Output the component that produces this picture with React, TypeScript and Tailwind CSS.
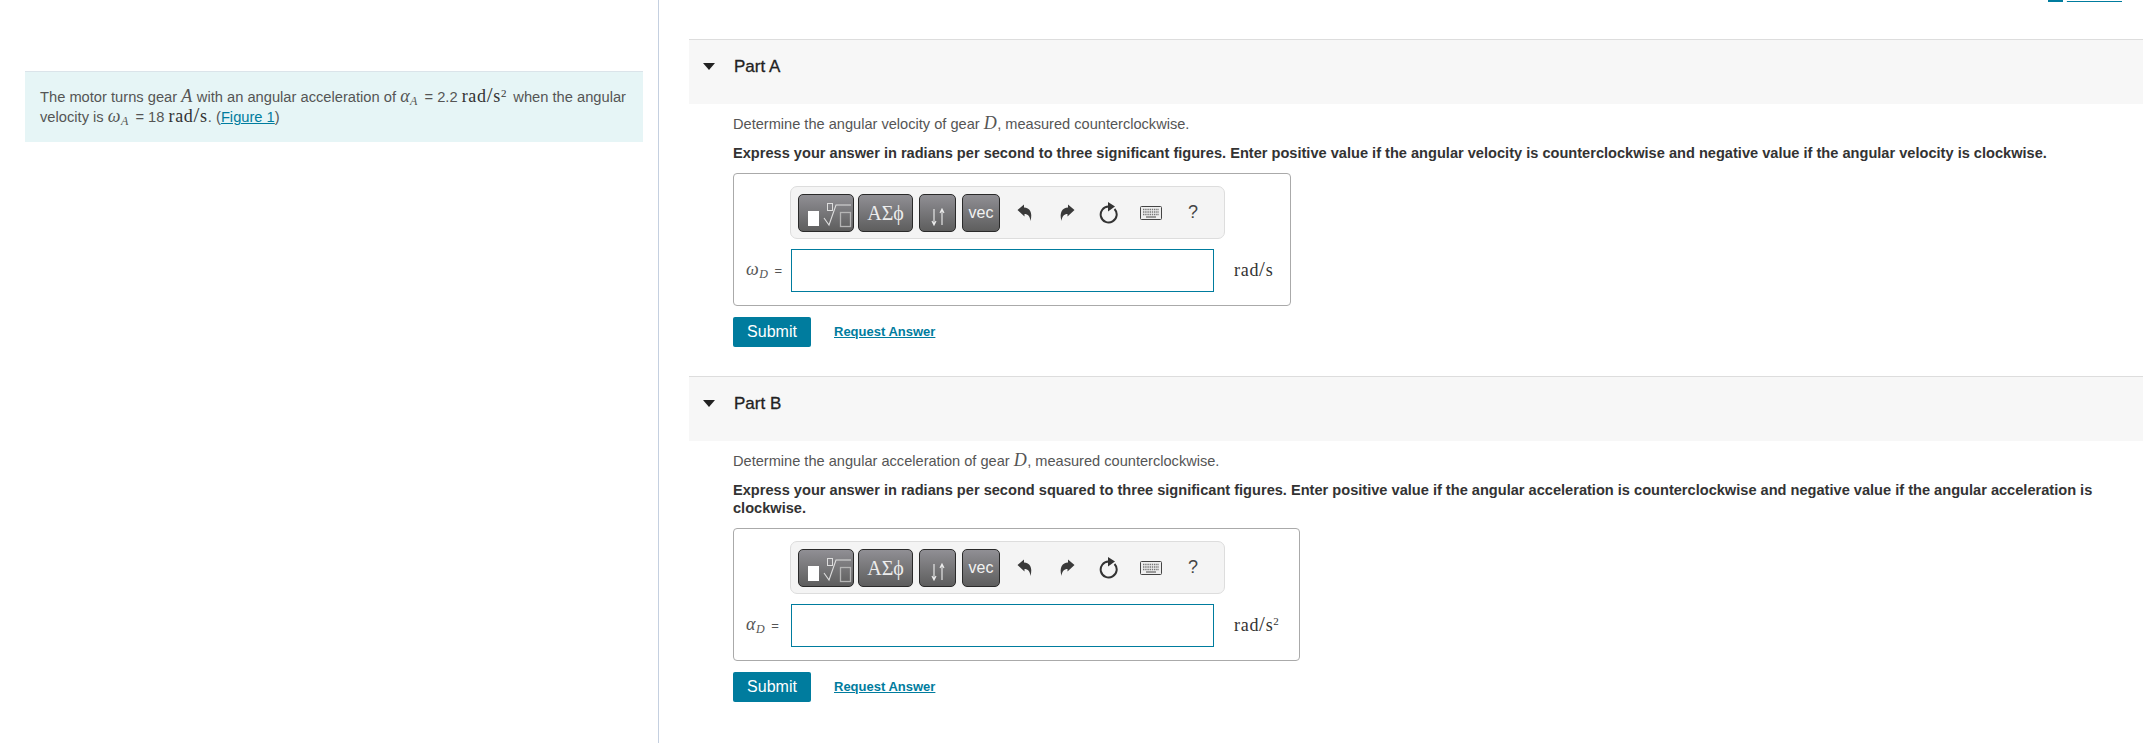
import React from 'react';

const mathFont = "font-['Liberation_Serif',serif]";

const V: React.FC<{ children: React.ReactNode; sub?: string }> = ({ children, sub }) => (
    <span className={`${mathFont} italic text-[18px] leading-[0] tracking-[0.5px]`}>
        {children}
        {sub && <sub className="text-[12px] pr-[2.5px]">{sub}</sub>}
    </span>
);

const Unit: React.FC<{ sup?: boolean; children: React.ReactNode }> = ({ children, sup }) => (
    <span className={`${mathFont} text-[18px] leading-[0] tracking-[0.7px] text-[#333]`}>
        {children}
        <span className="text-[21px] leading-[0] font-light">/</span>s
        {sup && <sup className="text-[11px] pr-[2px]">2</sup>}
    </span>
);

const ToolBtn: React.FC<{ w: string; children: React.ReactNode }> = ({ w, children }) => (
    <div className={`${w} h-[38px] shrink-0 rounded-[5px] border border-[#2a2a2a] bg-gradient-to-b from-[#908f94] to-[#5e5e5e] text-[#f2f2f2] flex items-center justify-center`}>
        {children}
    </div>
);

const TemplateIcon = () => (
    <svg width="54" height="36" viewBox="0 0 54 36" fill="none">
        <rect x="9" y="16" width="11" height="15" fill="#fff" />
        <rect x="28.5" y="8.5" width="5" height="7" stroke="#ddd" />
        <path d="M25 23 L30 30 L37 10 H52" stroke="#ddd" strokeWidth="1.1" />
        <rect x="41.5" y="17.5" width="10" height="14" stroke="#b5b5b5" strokeWidth="1.3" />
    </svg>
);

const ArrowsIcon = () => (
    <svg width="14" height="18" viewBox="0 0 14 18" fill="none" stroke="#eee" strokeWidth="1.1" className="mt-[9px]">
        <path d="M3 1 V17 M1 13 L3 17 L5 13" />
        <path d="M11 17 V1 M9 5 L11 1 L13 5" />
    </svg>
);

const Undo = ({ flip }: { flip?: boolean }) => (
    <svg width="16" height="18" viewBox="0 0 16 18" className={flip ? '-scale-x-100' : ''}>
        <path d="M0.5 6 L7 0.5 V3.5 C12.5 4 16 8 13.5 17 C13 12.5 11 10 7.5 10 V12.5 Z" fill="#3a3a3a" />
    </svg>
);

const ResetIcon = () => (
    <svg width="20" height="22" viewBox="0 0 20 22" fill="none">
        <path d="M9.5 4.5 A8 8 0 1 0 15.5 7" stroke="#333" strokeWidth="2" />
        <path d="M9 0 L16 4.5 L9 9.5 Z" fill="#333" />
    </svg>
);

const KeyboardIcon = () => (
    <svg width="22" height="14" viewBox="0 0 22 14">
        <rect x="0.5" y="0.5" width="21" height="13" rx="1" fill="#eee" stroke="#444" />
        <path d="M3 3.5 H19 M3 6 H19 M3 8.5 H19" stroke="#777" strokeWidth="1.4" strokeDasharray="1.4 0.8" />
        <path d="M6 11 H16" stroke="#777" strokeWidth="1.4" />
    </svg>
);

const Toolbar = () => (
    <div className="w-[435px] h-[53px] rounded-[7px] border border-[#ddd] bg-[#f4f4f4] flex items-center pl-[7px]">
        <ToolBtn w="w-[56px]"><TemplateIcon /></ToolBtn>
        <div className="ml-[4px]">
            <ToolBtn w="w-[55px]"><span className={`${mathFont} text-[20px] text-[#ececec]`}>ΑΣϕ</span></ToolBtn>
        </div>
        <div className="ml-[6px]">
            <ToolBtn w="w-[37px]"><ArrowsIcon /></ToolBtn>
        </div>
        <div className="ml-[6px]">
            <ToolBtn w="w-[38px]"><span className="text-[16px]">vec</span></ToolBtn>
        </div>
        <div className="ml-[4px] flex items-center">
            <div className="w-[42px] flex justify-center"><Undo /></div>
            <div className="w-[42px] flex justify-center"><Undo flip /></div>
            <div className="w-[42px] flex justify-center"><ResetIcon /></div>
            <div className="w-[42px] flex justify-center"><KeyboardIcon /></div>
            <div className="w-[42px] text-center text-[18px] text-[#444]">?</div>
        </div>
    </div>
);

const AnswerBox: React.FC<{ label: React.ReactNode; unit: React.ReactNode }> = ({ label, unit }) => (
    <div className="w-fit rounded-[4px] border border-[#aaa] pt-[12px] pb-[13px] pr-[17px]">
        <div className="pl-[56px]"><Toolbar /></div>
        <div className="flex items-center mt-[10px]">
            <div className="w-[57px] pl-[12px] text-[13px] text-[#555] whitespace-nowrap">{label}</div>
            <div className="w-[423px] h-[43px] border border-[#007c9e] bg-white" />
            <div className="ml-[20px] whitespace-nowrap">{unit}</div>
        </div>
    </div>
);

const Part: React.FC<{ name: string; prompt: React.ReactNode; hint: string; box: React.ReactNode }> = ({ name, prompt, hint, box }) => (
    <section className="mb-[29px]">
        <div className="h-[65px] bg-[#f7f7f7] border-t border-[#ddd] flex items-start pt-[17px]">
            <div className="w-[45px] pl-[14px] pt-[6px]">
                <div className="w-0 h-0 border-x-[6px] border-x-transparent border-t-[7px] border-t-[#222]" />
            </div>
            <h2 className="text-[17px] leading-[20px] text-[#222] [-webkit-text-stroke:0.3px_#222]">{name}</h2>
        </div>
        <div className="pl-[44px]">
            <p className="mt-[10px] text-[14.6px] leading-[20px] text-[#555]">{prompt}</p>
            <p className="mt-[10px] mb-[11px] text-[14.6px] leading-[18px] font-bold text-[#333]">{hint}</p>
            {box}
            <div className="flex items-center mt-[11px]">
                <button className="w-[78px] h-[30px] rounded-[2px] bg-[#007c9e] text-white text-[16px]">Submit</button>
                <a className="ml-[23px] text-[13px] font-bold text-[#007c9e] underline">Request Answer</a>
            </div>
        </div>
    </section>
);

export default function App() {
    return (
        <div className="flex h-[743px] overflow-hidden bg-white font-['Liberation_Sans',Arial,sans-serif]">
            <aside className="w-[659px] shrink-0 border-r border-[#c5d0e0] pl-[25px] pr-[15px] pt-[71px]">
                <div className="bg-[#e6f5f6] border-t border-[#dbe4ea] pt-[15px] pl-[15px] pr-[10px] h-[71px] text-[14.7px] leading-[20px] text-[#555]">
                    The motor turns gear <V>A</V> with an angular acceleration of <V sub="A">α</V> = 2.2 <Unit sup>rad</Unit> when the angular velocity is <V sub="A">ω</V> = 18 <Unit>rad</Unit>. (<a className="text-[#007c9e] underline">Figure 1</a>)
                </div>
            </aside>
            <main className="flex-1 pl-[30px] pr-[9px]">
                <div className="h-[39px] flex justify-end items-start gap-[4px] pr-[21px]">
                    <span className="w-[15px] h-[2px] bg-[#007c9e]" />
                    <a className="text-[16px] font-bold leading-[20px] -mt-[15px] text-[#007c9e] underline h-fit">Review</a>
                </div>
                <Part
                    name="Part A"
                    prompt={<>Determine the angular velocity of gear <V>D</V>, measured counterclockwise.</>}
                    hint="Express your answer in radians per second to three significant figures. Enter positive value if the angular velocity is counterclockwise and negative value if the angular velocity is clockwise."
                    box={<AnswerBox label={<><V sub="D">ω</V> =</>} unit={<Unit>rad</Unit>} />}
                />
                <Part
                    name="Part B"
                    prompt={<>Determine the angular acceleration of gear <V>D</V>, measured counterclockwise.</>}
                    hint="Express your answer in radians per second squared to three significant figures. Enter positive value if the angular acceleration is counterclockwise and negative value if the angular acceleration is clockwise."
                    box={<AnswerBox label={<><V sub="D">α</V> =</>} unit={<Unit sup>rad</Unit>} />}
                />
            </main>
        </div>
    );
}
